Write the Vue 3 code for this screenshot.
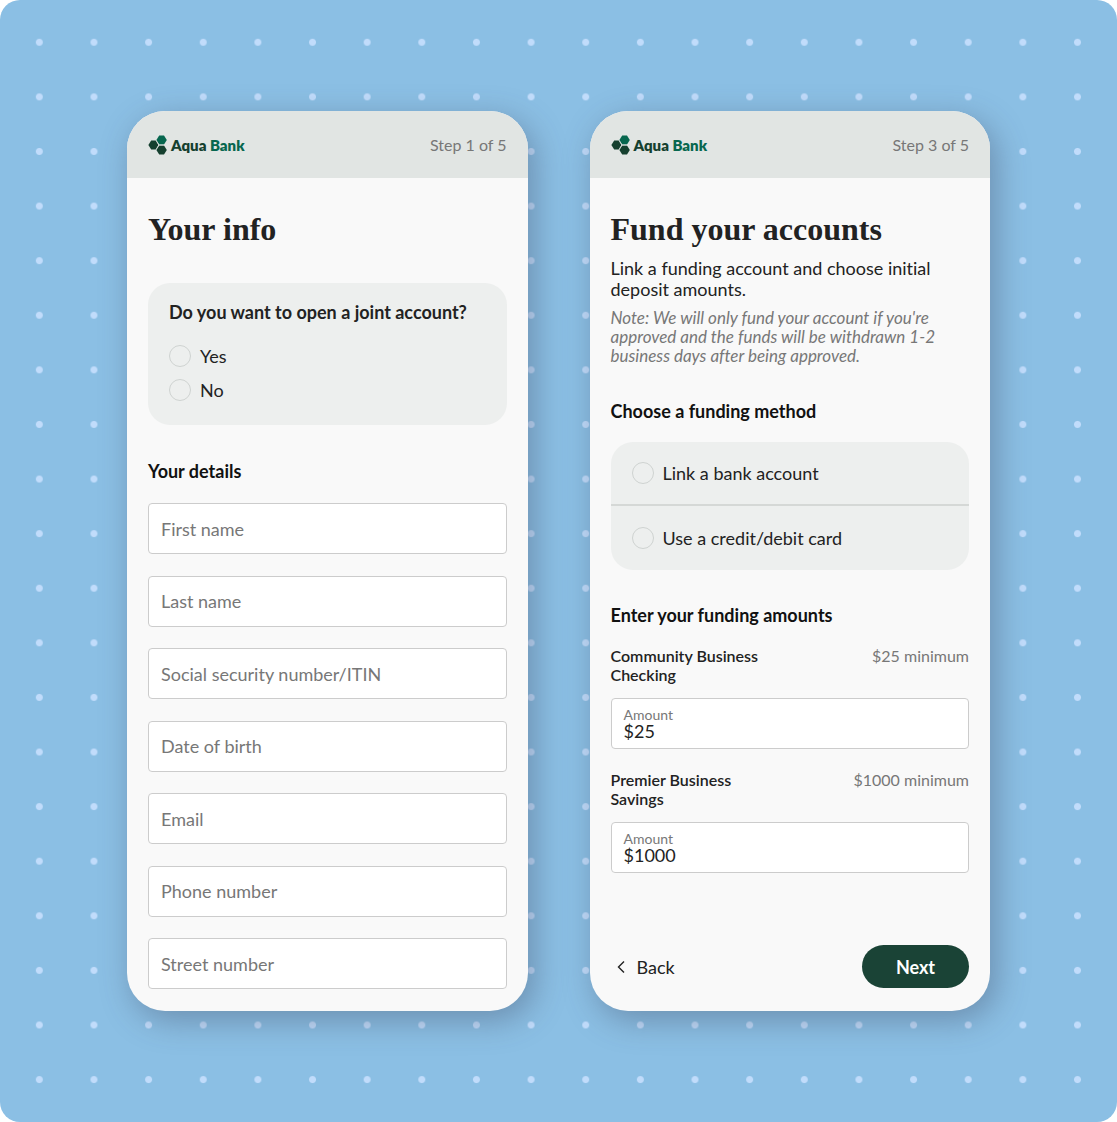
<template>
  <main class="page">
    <section class="phone">
      <header class="phone-header">
        <div class="brand">
          <svg class="brand-logo" viewBox="0 0 20 20" aria-hidden="true">
            <path d="M11.200 0.400h4.800l2.800 4.600-2.800 4.600h-4.800L8.400 5z" fill="#07674f" />
            <path d="M3.200 5.400h4.800l2.600 4.600-2.600 4.600H3.200L0.400 10z" fill="#15402f" />
            <path d="M11.200 10.400h4.800l2.800 4.600-2.800 4.600h-4.800L8.400 15z" fill="#15402f" />
            <path d="M8 5.400L10.800 10 8 14.600M10.800 10h8" fill="none" stroke="#e1e5e3" stroke-width="0.800" />
          </svg>
          <span class="brand-name">Aqua <span class="brand-accent">Bank</span></span>
        </div>
        <span class="step">Step 1 of 5</span>
      </header>

      <form class="phone-body" @submit.prevent>
        <h1 class="title">Your info</h1>

        <fieldset class="panel question">
          <legend class="question-title">Do you want to open a joint account?</legend>
          <label v-for="option in jointOptions" :key="option" class="option">
            <input v-model="joint" type="radio" name="joint" class="radio" :value="option" />
            <span>{{ option }}</span>
          </label>
        </fieldset>

        <h2 class="subtitle details-title">Your details</h2>

        <div class="fields">
          <input
            v-for="field in fields"
            :key="field"
            type="text"
            class="field"
            :placeholder="field"
            :aria-label="field"
          />
        </div>
      </form>
    </section>

    <section class="phone">
      <header class="phone-header">
        <div class="brand">
          <svg class="brand-logo" viewBox="0 0 20 20" aria-hidden="true">
            <path d="M11.200 0.400h4.800l2.800 4.600-2.800 4.600h-4.800L8.400 5z" fill="#07674f" />
            <path d="M3.200 5.400h4.800l2.600 4.600-2.600 4.600H3.200L0.400 10z" fill="#15402f" />
            <path d="M11.200 10.400h4.800l2.800 4.600-2.800 4.600h-4.800L8.400 15z" fill="#15402f" />
            <path d="M8 5.400L10.800 10 8 14.600M10.800 10h8" fill="none" stroke="#e1e5e3" stroke-width="0.800" />
          </svg>
          <span class="brand-name">Aqua <span class="brand-accent">Bank</span></span>
        </div>
        <span class="step">Step 3 of 5</span>
      </header>

      <form class="phone-body" @submit.prevent>
        <h1 class="title">Fund your accounts</h1>
        <p class="intro">Link a funding account and choose initial deposit amounts.</p>
        <p class="note">
          Note: We will only fund your account if you're approved and the funds will be withdrawn
          1-2 business days after being approved.
        </p>

        <h2 id="method-title" class="subtitle method-title">Choose a funding method</h2>
        <div class="panel methods" role="radiogroup" aria-labelledby="method-title">
          <label v-for="option in methods" :key="option" class="option method">
            <input v-model="method" type="radio" name="method" class="radio" :value="option" />
            <span>{{ option }}</span>
          </label>
        </div>

        <h2 class="subtitle amounts-title">Enter your funding amounts</h2>
        <div v-for="account in accounts" :key="account.name" class="account">
          <div class="account-head">
            <h3 class="account-name">{{ account.name }}</h3>
            <span class="account-min">{{ account.minimum }} minimum</span>
          </div>
          <label class="amount">
            <span class="amount-label">Amount</span>
            <input v-model="account.amount" type="text" class="amount-input" />
          </label>
        </div>

        <footer class="actions">
          <button type="button" class="back">
            <svg class="back-icon" viewBox="0 0 8 14" aria-hidden="true">
              <path d="M7 1.500L1.500 7 7 12.500" fill="none" stroke="currentColor" stroke-width="1.400" />
            </svg>
            Back
          </button>
          <button type="submit" class="next">Next</button>
        </footer>
      </form>
    </section>
  </main>
</template>

<script setup>
import { ref } from 'vue';

const jointOptions = ['Yes', 'No'];
const joint = ref('');

const fields = [
  'First name',
  'Last name',
  'Social security number/ITIN',
  'Date of birth',
  'Email',
  'Phone number',
  'Street number',
];

const methods = ['Link a bank account', 'Use a credit/debit card'];
const method = ref('');

const accounts = ref([
  { name: 'Community Business Checking', minimum: '$25', amount: '$25' },
  { name: 'Premier Business Savings', minimum: '$1000', amount: '$1000' },
]);
</script>

<style>
body {
  margin: 0;
  background: #fff;
}
</style>

<style scoped>
.page {
  position: relative;
  display: grid;
  grid-template-columns: 1fr 1fr;
  gap: 62px;
  min-height: 100vh;
  padding: 111px 127px;
  box-sizing: border-box;
  border-radius: 20px;
  background: #8bbfe4;
  color: #222;
  font-family: Lato, 'Liberation Sans', sans-serif;
  font-size: 18px;
  font-variant-ligatures: none;
}

/* dotted backdrop */
.page::before {
  content: '';
  position: absolute;
  inset: 15px 12px;
  background: radial-gradient(circle, #c1dcfb 3px, transparent 4px) 0 0 / 55px 55px round;
}

.page *,
.page *::before {
  box-sizing: border-box;
}

.phone {
  position: relative;
  display: flex;
  flex-direction: column;
  overflow: hidden;
  border-radius: 38px;
  background: #f9f9f9;
  box-shadow: 6px 9px 32px rgba(60, 70, 95, 0.4);
}

.phone-header {
  display: flex;
  align-items: center;
  justify-content: space-between;
  height: 67px;
  padding: 0 21px;
  background: #e1e5e3;
}

.brand {
  display: flex;
  align-items: center;
  gap: 3px;
}

.brand-logo {
  width: 20px;
  height: 20px;
}

.brand-name {
  color: #15402f;
  font-size: 15px;
  font-weight: 800;
}

.brand-accent {
  color: #07674f;
}

.step {
  color: #777;
  font-size: 16px;
}

.phone-body {
  display: flex;
  flex: 1;
  flex-direction: column;
  padding: 31px 21px 22px;
}

.title {
  margin: 0;
  font-family: 'Liberation Serif', serif;
  font-size: 32px;
  font-weight: 700;
  line-height: 40px;
}

.panel {
  margin: 0;
  border: 0;
  border-radius: 22px;
  background: #edefee;
}

.question {
  display: flex;
  flex-direction: column;
  gap: 12px;
  margin-top: 34px;
  padding: 18px 21px 24px;
}

.question-title {
  float: left;
  margin-bottom: 10px;
  padding: 0;
  font-weight: 700;
  line-height: 22px;
}

.option {
  display: flex;
  align-items: center;
  gap: 9px;
  line-height: 22px;
}

.radio {
  appearance: none;
  width: 22px;
  height: 22px;
  margin: 0;
  border: 1px solid #cfd3d1;
  border-radius: 50%;
}

.radio:checked {
  border: 6px solid #1a4336;
}

.subtitle {
  margin: 0;
  color: #111;
  font-size: 18px;
  font-weight: 700;
  line-height: 22px;
}

.details-title {
  margin: 35px 0 21px;
}

.fields {
  display: flex;
  flex: 1;
  flex-direction: column;
  justify-content: space-between;
  gap: 20px;
}

.field {
  width: 100%;
  height: 51px;
  padding: 0 12px;
  border: 1px solid #ccc;
  border-radius: 4px;
  background: #fff;
  color: #222;
  font: inherit;
}

.field::placeholder {
  color: #777;
  opacity: 1;
}

.intro {
  margin: 9px 0 0;
  line-height: 21px;
}

.note {
  margin: 8px 0 0;
  color: #777;
  font-size: 17px;
  font-style: italic;
  line-height: 19px;
}

.method-title {
  margin: 35px 0 20px;
}

.method {
  height: 64px;
  padding: 0 21px;
}

.method:first-child {
  border-bottom: 2px solid #d5d8d6;
}

.amounts-title {
  margin: 34px 0 20px;
}

.account + .account {
  margin-top: 21px;
}

.account-head {
  display: flex;
  justify-content: space-between;
  margin-bottom: 14px;
  font-size: 16px;
  line-height: 19px;
}

.account-name {
  max-width: 160px;
  margin: 0;
  font-size: 16px;
  font-weight: 600;
}

.account-min {
  color: #777;
}

.amount {
  display: flex;
  flex-direction: column;
  justify-content: center;
  height: 51px;
  padding: 0 12px;
  border: 1px solid #ccc;
  border-radius: 4px;
  background: #fff;
}

.amount-label {
  color: #777;
  font-size: 14px;
  line-height: 15px;
}

.amount-input {
  width: 100%;
  height: 18px;
  padding: 0;
  border: 0;
  background: none;
  color: #222;
  font: inherit;
}

.actions {
  display: flex;
  align-items: center;
  justify-content: space-between;
  margin-top: auto;
  padding-bottom: 1px;
}

.back {
  display: flex;
  align-items: center;
  gap: 12px;
  padding: 0 6px;
  border: 0;
  background: none;
  color: #222;
  font: inherit;
  cursor: pointer;
}

.back-icon {
  width: 8px;
  height: 14px;
}

.next {
  min-width: 107px;
  height: 43px;
  border: 0;
  border-radius: 22px;
  background: #1a4336;
  color: #fff;
  font: inherit;
  font-weight: 700;
  cursor: pointer;
}
</style>
